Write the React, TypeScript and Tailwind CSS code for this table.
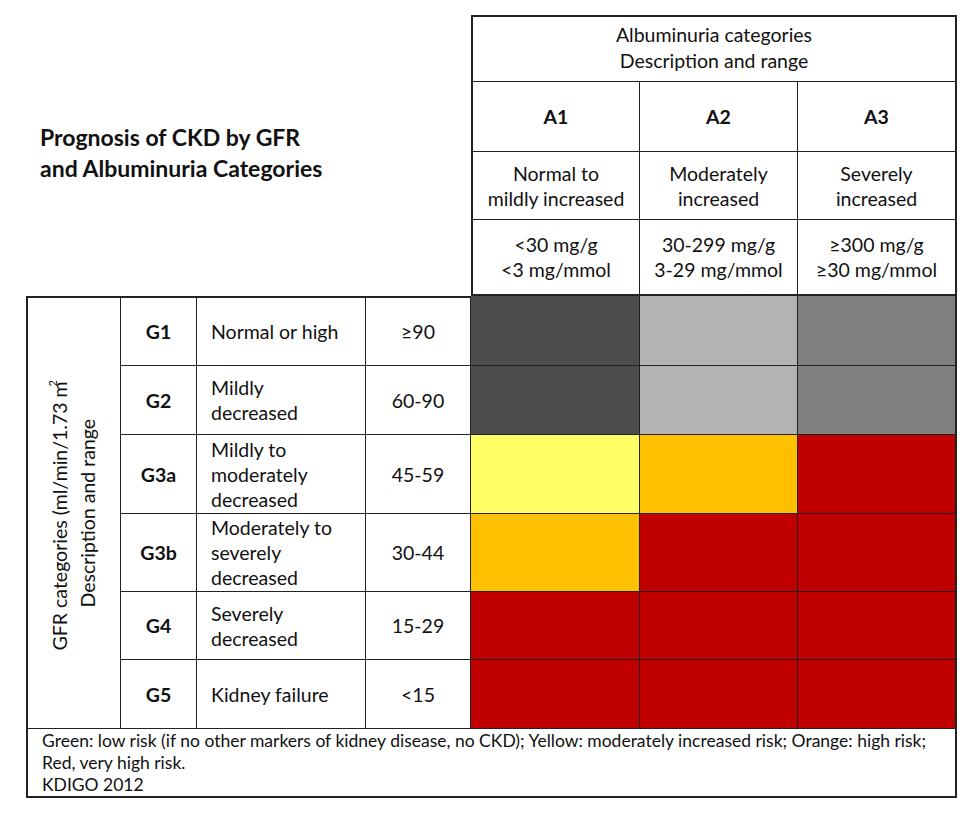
import React from "react";

const B = "border-[#222]";

const rows = [
  { g: "G1", d: ["Normal or high"], r: "≥90", c: ["bg-[#4d4d4d]", "bg-[#b3b3b3]", "bg-[#808080]"] },
  { g: "G2", d: ["Mildly", "decreased"], r: "60-90", c: ["bg-[#4d4d4d]", "bg-[#b3b3b3]", "bg-[#808080]"] },
  { g: "G3a", d: ["Mildly to", "moderately", "decreased"], r: "45-59", c: ["bg-[#ffff66]", "bg-[#ffc000]", "bg-[#c00000]"] },
  { g: "G3b", d: ["Moderately to", "severely", "decreased"], r: "30-44", c: ["bg-[#ffc000]", "bg-[#c00000]", "bg-[#c00000]"] },
  { g: "G4", d: ["Severely", "decreased"], r: "15-29", c: ["bg-[#c00000]", "bg-[#c00000]", "bg-[#c00000]"] },
  { g: "G5", d: ["Kidney failure"], r: "<15", c: ["bg-[#c00000]", "bg-[#c00000]", "bg-[#c00000]"] },
];

export default function App() {
  return (
    <div
      className="w-[975px] h-[819px] bg-white text-[#111] pt-[15px] pl-[26px]"
      style={{ fontFamily: "Lato, 'Open Sans', sans-serif" }}
    >
      <div className="grid grid-cols-[95px_76px_169px_105px_169px_158px_159px] grid-rows-[67px_70px_68px_76px_70px_69px_79px_78px_68px_69px_69px] text-[19.5px] leading-[25px]">
        {/* Title */}
        <div className="col-span-4 row-span-4 flex items-center pl-[14px] pb-[6px]">
          <div className="font-bold text-[23px] leading-[31px]">
            Prognosis of CKD by GFR
            <br />
            and Albuminuria Categories
          </div>
        </div>
        {/* Header */}
        <div className={`col-span-3 border-t-2 border-l-2 border-r-2 border-b ${B} flex items-center justify-center text-center leading-[26px] pb-[2px]`}>
          <div>
            Albuminuria categories
            <br />
            Description and range
          </div>
        </div>
        <div className={`border-l-2 border-r border-b ${B} flex items-center justify-center font-bold`}>A1</div>
        <div className={`border-r border-b ${B} flex items-center justify-center font-bold`}>A2</div>
        <div className={`border-r-2 border-b ${B} flex items-center justify-center font-bold`}>A3</div>

        <div className={`border-l-2 border-r border-b ${B} flex items-center justify-center text-center`}>
          <div>Normal to<br />mildly increased</div>
        </div>
        <div className={`border-r border-b ${B} flex items-center justify-center text-center`}>
          <div>Moderately<br />increased</div>
        </div>
        <div className={`border-r-2 border-b ${B} flex items-center justify-center text-center`}>
          <div>Severely<br />increased</div>
        </div>

        <div className={`border-l-2 border-r border-b-2 ${B} flex items-center justify-center text-center`}>
          <div>&lt;30 mg/g<br />&lt;3 mg/mmol</div>
        </div>
        <div className={`border-r border-b-2 ${B} flex items-center justify-center text-center`}>
          <div>30-299 mg/g<br />3-29 mg/mmol</div>
        </div>
        <div className={`border-r-2 border-b-2 ${B} flex items-center justify-center text-center`}>
          <div>≥300 mg/g<br />≥30 mg/mmol</div>
        </div>

        {/* Body */}
        <div className={`row-span-6 border-l-2 border-t-2 border-r border-b ${B} flex items-center justify-center`}>
          <div className="[writing-mode:vertical-rl] rotate-180 text-center leading-[28px]">
            <div>
              GFR categories (ml/min/1.73 m<sup className="text-[11px] align-super">2</sup>
            </div>
            <div>Description and range</div>
          </div>
        </div>
        {rows.map((row, i) => (
          <React.Fragment key={row.g}>
            <div className={`${i === 0 ? "border-t-2" : ""} border-r border-b ${B} flex items-center justify-center font-bold`}>
              {row.g}
            </div>
            <div className={`${i === 0 ? "border-t-2" : ""} border-r border-b ${B} flex items-center pl-[14px]`}>
              <div>
                {row.d.map((l) => (
                  <div key={l}>{l}</div>
                ))}
              </div>
            </div>
            <div className={`${i === 0 ? "border-t-2" : ""} border-r border-b ${B} flex items-center justify-center`}>
              {row.r}
            </div>
            {row.c.map((c, j) => (
              <div
                key={j}
                className={`${c} ${j === 2 ? "border-r-2" : "border-r"} border-b ${B}`}
              />
            ))}
          </React.Fragment>
        ))}

        {/* Footer */}
        <div className={`col-span-7 border-l-2 border-r-2 border-b-2 ${B} pl-[14px] pt-[1px] text-[17.5px] leading-[22px]`}>
          <div>
            Green: low risk (if no other markers of kidney disease, no CKD); Yellow: moderately increased risk; Orange: high risk;
          </div>
          <div>Red, very high risk.</div>
          <div>KDIGO 2012</div>
        </div>
      </div>
    </div>
  );
}
